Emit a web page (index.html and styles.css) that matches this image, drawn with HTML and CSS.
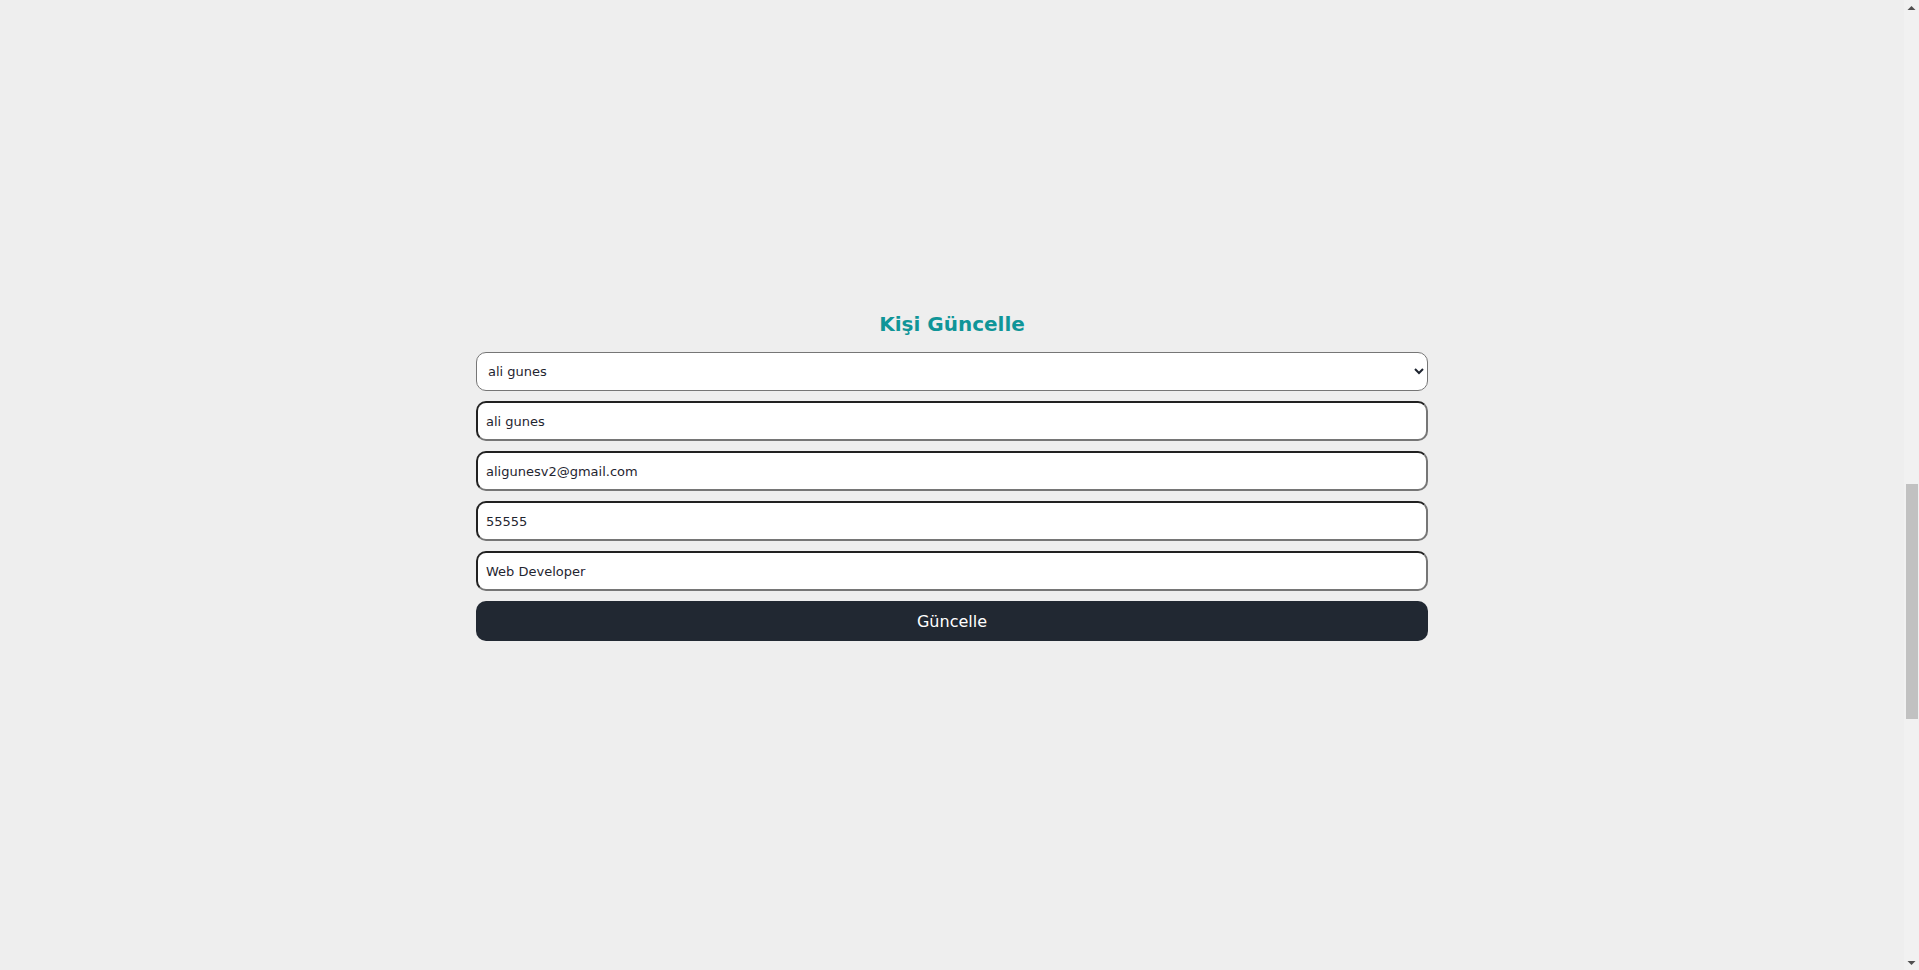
FILE: index.html
```html
<!DOCTYPE html>
<html lang="tr">
<head>
<meta charset="utf-8">
<title>Kişi Güncelle</title>
<link rel="stylesheet" href="styles.css">
</head>
<body>
<div class="app">
  <main class="content">
    <section class="panel">
      <h2 class="title">Kişi Güncelle</h2>
      <form class="form">
        <select class="field select">
          <option>ali gunes</option>
        </select>
        <input class="field input" type="text" value="ali gunes">
        <input class="field input" type="email" value="aligunesv2@gmail.com">
        <input class="field input" type="text" value="55555">
        <input class="field input" type="text" value="Web Developer">
        <button class="btn" type="button">Güncelle</button>
      </form>
    </section>
  </main>
  <div class="scrollbar" aria-hidden="true">
    <div class="sb-arrow">
      <svg width="9" height="6" viewBox="0 0 9 6"><polygon points="0.5,5 4.5,1 8.5,5" fill="#505050"/></svg>
    </div>
    <div class="sb-track">
      <div class="sb-thumb"></div>
    </div>
    <div class="sb-arrow">
      <svg width="9" height="6" viewBox="0 0 9 6"><polygon points="0.5,1 8.5,1 4.5,5" fill="#505050"/></svg>
    </div>
  </div>
</div>
</body>
</html>
```
FILE: styles.css
```css
html, body {
  margin: 0;
  padding: 0;
  background: #eeeeee;
  overflow: hidden;
}
body {
  font-family: "DejaVu Sans", "Liberation Sans", sans-serif;
}
.app {
  display: flex;
  height: 970px;
}
.content {
  flex: 1;
  box-sizing: border-box;
  padding-top: 312px;
}
.panel {
  width: 50%;
  margin: 0 auto;
  display: flex;
  flex-direction: column;
}
.title {
  margin: 0 0 16px;
  text-align: center;
  font-size: 20px;
  line-height: 24px;
  font-weight: bold;
  color: #0f9598;
}
.form {
  display: flex;
  flex-direction: column;
  gap: 10px;
}
.field {
  box-sizing: border-box;
  width: 100%;
  font-family: "DejaVu Sans", "Liberation Sans", sans-serif;
  font-size: 13px;
  color: #1f2530;
  background: #ffffff;
  border-radius: 10px;
  margin: 0;
}
.select {
  height: 39px;
  border: 1px solid #767676;
  padding: 0 7px;
}
.input {
  height: 40px;
  border: 2px inset #767676;
  padding: 0 8px;
  outline: none;
}
.btn {
  height: 40px;
  border: none;
  border-radius: 10px;
  background: #212832;
  color: #ffffff;
  font-family: "DejaVu Sans", "Liberation Sans", sans-serif;
  font-size: 16px;
  margin: 0;
  padding: 0;
}
.scrollbar {
  width: 15px;
  background: #f1f1f1;
  display: flex;
  flex-direction: column;
}
.sb-arrow {
  height: 15px;
  display: flex;
  align-items: center;
  justify-content: center;
}
.sb-track {
  flex: 1;
  box-sizing: border-box;
  padding-top: 469px;
}
.sb-thumb {
  height: 235px;
  margin: 0 1px 0 2px;
  background: #c1c1c1;
}
```
